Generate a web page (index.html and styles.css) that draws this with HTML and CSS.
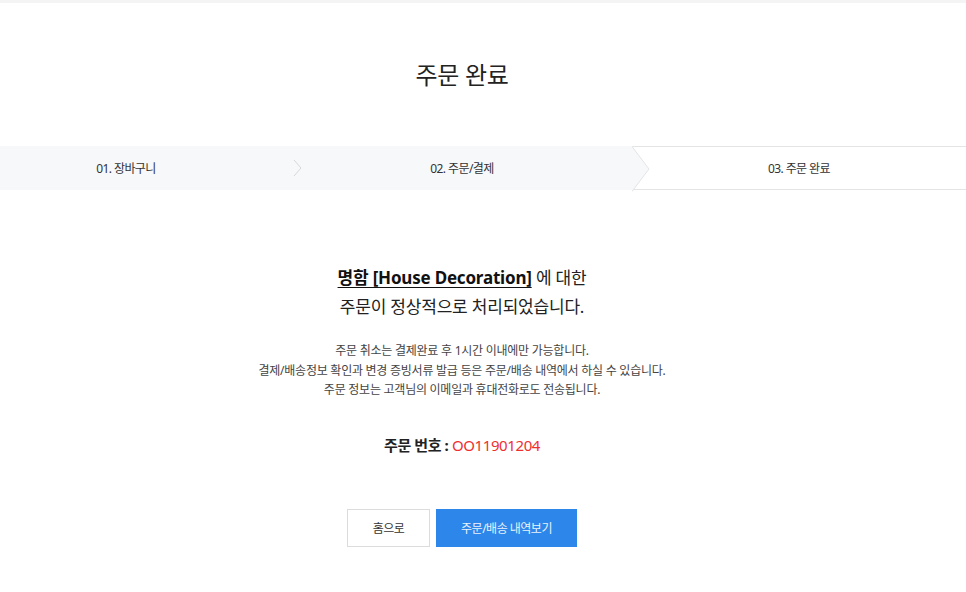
FILE: index.html
```html
<!DOCTYPE html>
<html lang="ko">
<head>
<meta charset="UTF-8" />
<meta name="viewport" content="width=device-width, initial-scale=1.0" />
<title>주문 완료</title>
<link rel="stylesheet" href="styles.css">
</head>
<body>
<div class="top-line"></div>
<h1 class="page-title">주문 완료</h1>

<ol class="steps">
  <li class="step step-cart">01. 장바구니
    <svg class="chevron" width="9" height="18" viewBox="0 0 9 18"><polyline points="1,1 8,9 1,17" fill="none" stroke="#d6d8dc" stroke-width="1"/></svg>
  </li>
  <li class="step step-pay">02. 주문/결제</li>
  <li class="step step-done">
    <svg class="arrow" width="18" height="46" viewBox="0 0 18 46"><polygon points="0,0 17,23 0,46" fill="#f7f8fa"/><polyline points="0,0.5 17,23 0,45.5" fill="none" stroke="#e3e4e6" stroke-width="1"/></svg>
    03. 주문 완료
  </li>
</ol>

<div class="result">
  <p class="result-main"><a class="product" href="#">명함 [House Decoration]</a> 에 대한<br>주문이 정상적으로 처리되었습니다.</p>
  <p class="result-note">주문 취소는 결제완료 후 1시간 이내에만 가능합니다.<br>결제/배송정보 확인과 변경 증빙서류 발급 등은 주문/배송 내역에서 하실 수 있습니다.<br>주문 정보는 고객님의 이메일과 휴대전화로도 전송됩니다.</p>
  <p class="order-no">주문 번호 : <span class="order-code">OO11901204</span></p>
  <div class="buttons">
    <a class="btn btn-home" href="#">홈으로</a>
    <a class="btn btn-orders" href="#">주문/배송 내역보기</a>
  </div>
</div>
</body>
</html>
```

FILE: styles.css
```css
body {
  margin: 0;
  font-family: "Noto Sans", "Noto Sans CJK KR", sans-serif;
  color: #222;
  background: #fff;
  overflow-x: hidden;
}
.top-line {
  height: 3px;
  background: #f4f4f5;
}
.page-title {
  margin: 55px 42px 0 0;
  font-size: 24px;
  font-weight: 400;
  line-height: 34px;
  text-align: center;
  color: #222;
  letter-spacing: -0.3px;
}

.steps {
  display: grid;
  grid-template-columns: 298px 334px 1fr;
  list-style: none;
  margin: 54px 0 0;
  padding: 0;
  height: 44px;
  background: #f7f8fa;
}
.step {
  position: relative;
  display: flex;
  align-items: center;
  justify-content: center;
  font-size: 12px;
  color: #333;
  letter-spacing: -0.6px;
}
.step-cart {
  padding-right: 46px;
}
.step-pay {
  padding-right: 6px;
}
.chevron {
  position: absolute;
  right: -4px;
  top: 13px;
}
.step-done {
  background: #fff;
  border-top: 1px solid #e3e4e6;
  border-bottom: 1px solid #e3e4e6;
  box-sizing: border-box;
}
.arrow {
  position: absolute;
  left: 0;
  top: -1px;
}

.result {
  padding: 73px 42px 0 0;
  text-align: center;
}
.result-main {
  margin: 0;
  font-size: 17px;
  line-height: 29px;
  color: #222;
  letter-spacing: -0.2px;
}
.product {
  color: #111;
  font-weight: 700;
  text-decoration: underline;
  text-underline-offset: 3px;
}
.result-note {
  margin: 20px 0 0;
  font-size: 12px;
  line-height: 19.5px;
  color: #444;
  letter-spacing: -0.25px;
}
.order-no {
  margin: 33px 0 0;
  font-size: 15px;
  font-weight: 700;
  line-height: 24px;
  color: #222;
  letter-spacing: -0.4px;
}
.order-code {
  color: #ef2f2f;
  font-weight: 400;
}
.buttons {
  display: flex;
  justify-content: center;
  gap: 6px;
  margin-top: 52px;
}
.btn {
  display: flex;
  align-items: center;
  justify-content: center;
  height: 38px;
  box-sizing: border-box;
  font-size: 12px;
  text-decoration: none;
  letter-spacing: -0.5px;
}
.btn-home {
  width: 83px;
  border: 1px solid #dcdcdc;
  color: #333;
  background: #fff;
}
.btn-orders {
  width: 141px;
  background: #2d86e9;
  color: #eaf3fd;
}
```
